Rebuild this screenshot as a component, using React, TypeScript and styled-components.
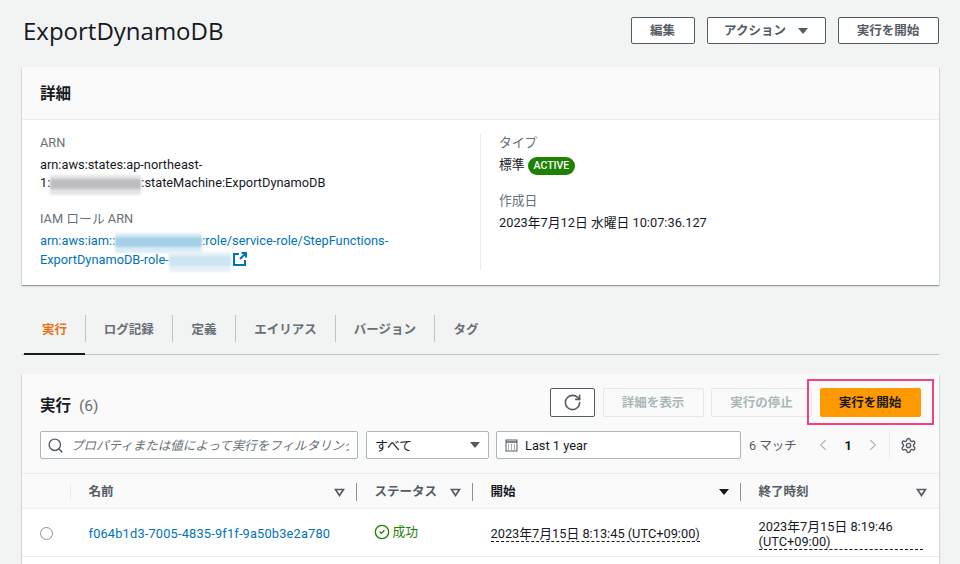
import React from "react";
import styled, { createGlobalStyle } from "styled-components";
import { Search, RotateCw, Settings, ChevronLeft, ChevronRight, CircleCheck } from "lucide-react";

const FONT = `"Roboto", "Noto Sans CJK JP", sans-serif`;

const Global = createGlobalStyle`
  html, body { margin: 0; padding: 0; height: 564px; overflow: hidden; background: #f2f3f3; }
  body { font-family: ${FONT}; font-size: 12.8px; line-height: 18px; color: #16191f; }
  * { box-sizing: border-box; }
`;

const Page = styled.div`
  width: 960px;
  height: 564px;
  overflow: hidden;
  padding: 17px 21.5px 0 22px;
`;
const HeaderBar = styled.header`
  display: flex;
  align-items: center;
  height: 27px;
  margin-bottom: 23px;
`;
const Title = styled.h1`
  flex: 1;
  margin: 0;
  padding-left: 1px;
  font-family: "Open Sans", sans-serif;
  font-size: 24px;
  line-height: 28px;
  font-weight: 400;
`;
const Actions = styled.div`
  display: flex;
  gap: 12px;
`;
const Button = styled.button<{ $w: number; $kind?: "disabled" | "primary" }>`
  display: inline-flex;
  align-items: center;
  justify-content: center;
  gap: 12px;
  flex: none;
  width: ${(p) => p.$w}px;
  height: 100%;
  min-height: 27px;
  padding: 0;
  border-radius: 2px;
  border: 1px solid ${(p) => (p.$kind === "disabled" ? "#e3e7e7" : p.$kind === "primary" ? "#ff9900" : "#545b64")};
  background: ${(p) => (p.$kind === "primary" ? "#ff9900" : p.$kind === "disabled" ? "#fafafa" : "#fff")};
  color: ${(p) => (p.$kind === "disabled" ? "#aab7b8" : p.$kind === "primary" ? "#16191f" : "#545b64")};
  font: 700 12.5px/18px ${FONT};
`;
const Caret = styled.span<{ $c?: string }>`
  display: inline-block;
  width: 0;
  height: 0;
  border-left: 5px solid transparent;
  border-right: 5px solid transparent;
  border-top: 6px solid ${(p) => p.$c ?? "#545b64"};
`;
const Card = styled.section`
  background: #fff;
  box-shadow: 0 1px 1px 0 rgba(0, 28, 36, 0.3), 1px 1px 1px 0 rgba(0, 28, 36, 0.08), -1px 1px 1px 0 rgba(0, 28, 36, 0.08);
`;
const DetailHead = styled.div`
  display: flex;
  align-items: center;
  height: 53px;
  padding: 2px 0 0 18px;
  background: #fafafa;
  border-bottom: 1px solid #eaeded;
`;
const CardTitle = styled.h2`
  margin: 0;
  font-size: 15.5px;
  line-height: 20px;
  font-weight: 700;
`;
const DetailBody = styled.div`
  display: grid;
  grid-template-columns: 440px 1fr;
  height: 165px;
  padding: 14px 18px 18px;
`;
const Col = styled.div<{ $divider?: boolean }>`
  display: flex;
  flex-direction: column;
  gap: 17px;
  ${(p) => p.$divider && "border-left: 1px solid #eaeded; padding-left: 18px;"}
`;
const ColLeft = styled(Col)`
  padding-right: 60px;
`;
const Label = styled.div`
  color: #687078;
  margin-bottom: 4px;
`;
const Value = styled.div`
  color: #16191f;
`;
const Link = styled.a`
  color: #0073bb;
  word-break: break-all;
`;
const Uuid = styled(Link)`
  letter-spacing: 0.18px;
`;
const Redact = styled.span<{ $w: number; $tone: string; $edge: string }>`
  display: inline-block;
  width: ${(p) => p.$w}px;
  height: 20px;
  margin: -2px 0;
  vertical-align: -6px;
  background: linear-gradient(180deg, ${(p) => p.$edge} 0 3px, ${(p) => p.$tone} 5px 13px, ${(p) => p.$edge} 15px);
  filter: blur(1.2px);
`;
const Badge = styled.span`
  display: inline-flex;
  align-items: center;
  height: 18px;
  margin-left: 3px;
  padding: 0 6px;
  border-radius: 9px;
  background: #1d8102;
  color: #fff;
  font-size: 10.5px;
  font-weight: 500;
`;
const ExtIcon = styled.svg`
  width: 14px;
  height: 14px;
  margin-left: 2px;
  vertical-align: -2px;
`;
const Tabs = styled.nav`
  display: flex;
  height: 41px;
  margin-top: 29px;
  margin-bottom: 19px;
  padding-left: 2px;
  padding-top: 1px;
  border-bottom: 1px solid #bcc5c7;
`;
const Tab = styled.div<{ $w: number; $active?: boolean; $last?: boolean }>`
  position: relative;
  width: ${(p) => p.$w}px;
  height: 40px;
  padding-top: 6px;
  text-align: center;
  font-size: 12.5px;
  font-weight: 700;
  color: ${(p) => (p.$active ? "#ec7211" : "#687078")};
  ${(p) => p.$active && "border-bottom: 2px solid #16191f; margin-bottom: -1px;"}
  &::after {
    content: "";
    display: ${(p) => (p.$last ? "none" : "block")};
    position: absolute;
    right: -0.5px;
    top: 0;
    width: 1px;
    height: 27px;
    background: #bcc5c7;
  }
`;
const TableHead = styled.div`
  background: #fafafa;
  height: 100px;
  padding: 14px 18px 0;
  border-bottom: 1px solid #eaeded;
`;
const ToolRow = styled.div`
  display: flex;
  align-items: center;
  height: 29px;
`;
const RunTitle = styled(CardTitle)`
  flex: 1;
  padding-top: 6px;
`;
const Count = styled.span`
  color: #687078;
  font-weight: 400;
  margin-left: 8px;
`;
const ToolButtons = styled.div`
  display: flex;
  height: 29px;
  gap: 7.5px;
`;
const Highlight = styled.span`
  position: relative;
  display: inline-flex;
  &::after {
    content: "";
    position: absolute;
    inset: -9px -13px -8px -13px;
    border: 2px solid #f5427f;
  }
`;
const FilterRow = styled.div`
  display: flex;
  align-items: center;
  height: 28px;
  margin-top: 14px;
`;
const Field = styled.div<{ $w: number }>`
  display: flex;
  align-items: center;
  flex: none;
  width: ${(p) => p.$w}px;
  height: 28px;
  padding: 0 8px;
  gap: 7px;
  background: #fff;
  border: 1px solid #aab7b8;
  border-radius: 2px;
  overflow: hidden;
`;
const SearchField = styled(Field)`
  margin-right: 8px;
  gap: 7px;
  padding-left: 6px;
`;
const SelectField = styled(Field)`
  justify-content: space-between;
  margin-right: 7px;
`;
const DateField = styled(Field)`
  margin-right: 8px;
`;
const FieldText = styled.span`
  padding-top: 2px;
`;
const Placeholder = styled(FieldText)`
  font-style: italic;
  color: #687078;
  white-space: nowrap;
  overflow: hidden;
  flex: 1;
  font-size: 12.5px;
`;
const MatchCount = styled(FieldText)`
  width: 64px;
  color: #545b64;
  font-size: 12.5px;
`;
const Pager = styled.div`
  display: flex;
  align-items: center;
  gap: 12.5px;
  width: 76.5px;
  height: 28px;
  padding-left: 1px;
  border-right: 1px solid #eaeded;
  color: #aab7b8;
  font-weight: 700;
`;
const PageNo = styled(FieldText)`
  color: #16191f;
`;
const GearWrap = styled.div`
  display: flex;
  margin-left: 10.5px;
  color: #545b64;
`;
const Row = styled.div<{ $head?: boolean }>`
  display: grid;
  grid-template-columns: 48.5px 286px 116px 268px 1fr;
  align-items: center;
  height: ${(p) => (p.$head ? 35 : 48)}px;
  padding-top: 2px;
  background: ${(p) => (p.$head ? "#fafafa" : "#fff")};
  border-bottom: 1px solid #eaeded;
`;
const HeadCell = styled.div<{ $light?: boolean; $none?: boolean }>`
  display: flex;
  align-items: center;
  justify-content: space-between;
  height: 18px;
  padding: 0 11px 0 18px;
  font-weight: 700;
  font-size: 12.5px;
  color: #545b64;
  border-right: 1px solid ${(p) => (p.$none ? "transparent" : p.$light ? "#eaeded" : "#879596")};
`;
const HeadCellDark = styled(HeadCell)`
  color: #16191f;
`;
const Cell = styled.div`
  padding: 0 18px;
`;
const RadioCell = styled.div`
  padding-left: 18px;
`;
const Radio = styled.span`
  display: block;
  width: 13px;
  height: 13px;
  border-radius: 50%;
  background: #fff;
  border: 1px solid #879596;
`;
const Status = styled.span`
  display: inline-flex;
  align-items: center;
  gap: 3px;
  margin-left: -1px;
  color: #1d8102;
`;
const Dotted = styled.span`
  border-bottom: 1px dashed #16191f;
  display: inline-block;
  line-height: 15px;
`;
const DottedWide = styled(Dotted)`
  display: block;
`;
const EndCell = styled.div`
  padding: 2px 16px 0 18px;
  line-height: 15px;
`;

const tabs: [string, number][] = [["実行", 61], ["ログ記録", 87.5], ["定義", 63], ["エイリアス", 100], ["バージョン", 99], ["タグ", 63]];

const SortHollow = () => (
  <svg width="11" height="9" viewBox="0 0 11 9" fill="none" stroke="#545b64" strokeWidth="1.7">
    <path d="M1.5 1.5h8L5.5 7.5z" />
  </svg>
);

export default function App() {
  return (
    <Page>
      <Global />
      <HeaderBar>
        <Title>ExportDynamoDB</Title>
        <Actions>
          <Button $w={64}>編集</Button>
          <Button $w={119}>アクション <Caret /></Button>
          <Button $w={101}>実行を開始</Button>
        </Actions>
      </HeaderBar>

      <Card>
        <DetailHead><CardTitle>詳細</CardTitle></DetailHead>
        <DetailBody>
          <ColLeft>
            <div>
              <Label>ARN</Label>
              <Value>arn:aws:states:ap-northeast-<br />1:<Redact $w={91} $tone="#bdbdc0" $edge="#e4e4e5" />:stateMachine:ExportDynamoDB</Value>
            </div>
            <div>
              <Label>IAM ロール ARN</Label>
              <Value>
                <Link>arn:aws:iam::<Redact $w={87} $tone="#a3cfe8" $edge="#dcedf6" />:role/service-role/StepFunctions-<br />ExportDynamoDB-role-<Redact $w={62} $tone="#cde5f3" $edge="#e6f2f9" /></Link>
                <ExtIcon viewBox="0 0 14 14" fill="none" stroke="#0073bb" strokeWidth="2">
                  <path d="M6 2H1v11h11V8" />
                  <path d="M7 7l6-6M8.5 1H13v4.5" />
                </ExtIcon>
              </Value>
            </div>
          </ColLeft>
          <Col $divider>
            <div>
              <Label>タイプ</Label>
              <Value>標準<Badge>ACTIVE</Badge></Value>
            </div>
            <div>
              <Label>作成日</Label>
              <Value>2023年7月12日 水曜日 10:07:36.127</Value>
            </div>
          </Col>
        </DetailBody>
      </Card>

      <Tabs>
        {tabs.map(([t, w], i) => (
          <Tab key={t} $w={w} $active={i === 0} $last={i === tabs.length - 1}>{t}</Tab>
        ))}
      </Tabs>

      <Card>
        <TableHead>
          <ToolRow>
            <RunTitle>実行<Count>(6)</Count></RunTitle>
            <ToolButtons>
              <Button $w={45}><RotateCw size={19} strokeWidth={2} /></Button>
              <Button $w={101} $kind="disabled">詳細を表示</Button>
              <Button $w={101} $kind="disabled">実行の停止</Button>
              <Highlight><Button $w={101} $kind="primary">実行を開始</Button></Highlight>
            </ToolButtons>
          </ToolRow>
          <FilterRow>
            <SearchField $w={318}>
              <Search size={17} color="#545b64" strokeWidth={2} />
              <Placeholder>プロパティまたは値によって実行をフィルタリング</Placeholder>
            </SearchField>
            <SelectField $w={123}><FieldText>すべて</FieldText><Caret /></SelectField>
            <DateField $w={245}>
              <svg width="13" height="13" viewBox="0 0 13 13" fill="none" stroke="#545b64" strokeWidth="1">
                <rect x="1" y="1" width="11" height="11" />
                <path d="M1 3h11" strokeWidth="1.6" />
                <path d="M3 6h1M6 6h1M9 6h1M3 8h1M6 8h1M9 8h1M3 10h1M6 10h1M9 10h1" />
              </svg>
              <FieldText>Last 1 year</FieldText>
            </DateField>
            <MatchCount>6 マッチ</MatchCount>
            <Pager>
              <ChevronLeft size={18} strokeWidth={1.5} />
              <PageNo>1</PageNo>
              <ChevronRight size={18} strokeWidth={1.5} />
            </Pager>
            <GearWrap><Settings size={17} strokeWidth={2} /></GearWrap>
          </FilterRow>
        </TableHead>
        <Row $head>
          <HeadCell $light />
          <HeadCell>名前 <SortHollow /></HeadCell>
          <HeadCell>ステータス <SortHollow /></HeadCell>
          <HeadCellDark>開始 <Caret $c="#16191f" /></HeadCellDark>
          <HeadCell $none>終了時刻 <SortHollow /></HeadCell>
        </Row>
        <Row>
          <RadioCell><Radio /></RadioCell>
          <Cell><Uuid>f064b1d3-7005-4835-9f1f-9a50b3e2a780</Uuid></Cell>
          <Cell><Status><CircleCheck size={16} strokeWidth={2} />成功</Status></Cell>
          <Cell><Dotted>2023年7月15日 8:13:45 (UTC+09:00)</Dotted></Cell>
          <EndCell><DottedWide>2023年7月15日 8:19:46 (UTC+09:00)</DottedWide></EndCell>
        </Row>
        <Row />
      </Card>
    </Page>
  );
}
